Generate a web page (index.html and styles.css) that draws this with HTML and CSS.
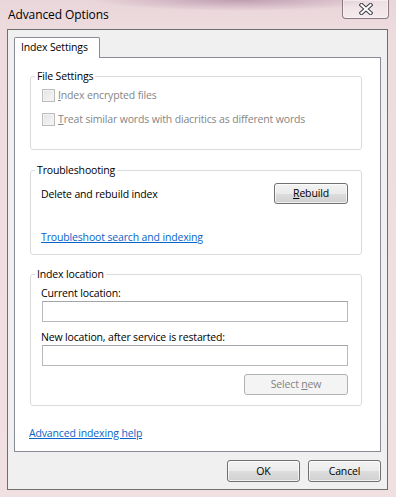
FILE: index.html
```html
<!DOCTYPE html>
<html>
<head>
<meta charset="utf-8">
<link rel="stylesheet" href="styles.css">
</head>
<body>
<div class="window">
  <div class="titlebar">
    <span class="title">Advanced Options</span>
    <div class="close">
      <svg width="14" height="12" viewBox="0 0 14 12">
        <path d="M2.5 2 L11.5 10 M11.5 2 L2.5 10" stroke="#3c3c44" stroke-width="4.2" stroke-linecap="square" fill="none"/>
        <path d="M2.5 2 L11.5 10 M11.5 2 L2.5 10" stroke="#ffffff" stroke-width="2.2" stroke-linecap="square" fill="none"/>
      </svg>
    </div>
  </div>
  <div class="client">
    <div class="tabs"><div class="tab">Index Settings</div></div>
    <div class="panel">
      <fieldset class="group g1">
        <legend>File Settings</legend>
        <div class="check"><span class="box"></span><span><u>I</u>ndex encrypted files</span></div>
        <div class="check"><span class="box"></span><span><u>T</u>reat similar words with diacritics as different words</span></div>
      </fieldset>
      <fieldset class="group g2">
        <legend>Troubleshooting</legend>
        <div class="row">
          <span>Delete and rebuild index</span>
          <button class="btn rebuild"><u>R</u>ebuild</button>
        </div>
        <a class="link trouble" href="#">Troubleshoot search and indexing</a>
      </fieldset>
      <fieldset class="group g3">
        <legend>Index location</legend>
        <div class="label">Current location:</div>
        <div class="input"></div>
        <div class="label second">New location, after service is restarted:</div>
        <div class="input"></div>
        <div class="btnrow"><button class="btn disabled selectnew">Select <u>n</u>ew</button></div>
      </fieldset>
      <a class="link help" href="#">Advanced indexing help</a>
    </div>
    <div class="footer">
      <button class="btn">OK</button>
      <button class="btn">Cancel</button>
    </div>
  </div>
</div>
</body>
</html>
```
FILE: styles.css
```css
body {
  margin: 0;
  font-family: "Open Sans", "Noto Sans", sans-serif;
  font-size: 10.5px;
  letter-spacing: -0.15px;
  color: #111;
}
.window {
  width: 396px;
  height: 497px;
  box-sizing: border-box;
  display: flex;
  flex-direction: column;
  background:
    radial-gradient(ellipse 150px 11px at 240px 0px, rgba(150, 100, 135, 0.5), rgba(150, 100, 135, 0) 100%),
    linear-gradient(180deg, #e9d6da 0, #eedbde 30px, #f1e0e1 100%);
}
.titlebar {
  height: 29px;
  display: flex;
  align-items: flex-start;
}
.title {
  padding: 7px 0 0 8px;
  line-height: 16px;
  font-size: 12px;
  letter-spacing: -0.1px;
  color: #000;
}
.close {
  margin-left: auto;
  margin-right: 7px;
  width: 47px;
  height: 19px;
  box-sizing: border-box;
  border: 1px solid rgba(70, 50, 60, 0.6);
  border-top: none;
  border-radius: 0 0 4px 4px;
  background: linear-gradient(180deg, rgba(255, 255, 255, 0.25), rgba(255, 255, 255, 0.45));
  box-shadow: inset 0 0 0 1px rgba(255, 255, 255, 0.45);
  display: flex;
  align-items: center;
  justify-content: center;
}
.client {
  margin: 0 8px 0 7px;
  height: 461px;
  box-sizing: border-box;
  border: 1px solid #6f6f6f;
  background: #f0f0f0;
  padding: 7px 6px 7px 6px;
  display: flex;
  flex-direction: column;
}
.tabs {
  display: flex;
}
.tab {
  position: relative;
  z-index: 1;
  width: 86px;
  height: 21px;
  box-sizing: border-box;
  border: 1px solid #898c95;
  border-bottom: none;
  border-radius: 2px 2px 0 0;
  background: #fff;
  padding-left: 6px;
  line-height: 19px;
  margin-bottom: -1px;
  color: #000;
}
.panel {
  height: 395px;
  box-sizing: border-box;
  border: 1px solid #898c95;
  background: #fff;
  padding: 11px 18px 0 15px;
  display: flex;
  flex-direction: column;
  align-items: flex-start;
}
.group {
  align-self: stretch;
  margin: 0;
  min-width: 0;
  border: 1px solid #d9dcdf;
  border-radius: 3px;
  padding: 0 13px 0 10px;
}
.group legend {
  padding: 0 2px;
  margin-left: -6px;
  line-height: 14px;
  height: 14px;
  color: #000;
}
.g1 {
  padding-top: 4px;
  padding-bottom: 22px;
}
.check {
  display: flex;
  align-items: center;
  height: 16px;
  color: #858585;
}
.check + .check {
  margin-top: 8px;
}
.box {
  width: 13px;
  height: 13px;
  box-sizing: border-box;
  margin: 0 3px 0 1px;
  border: 1px solid #bcbcbc;
  background: linear-gradient(135deg, #e3e3e3, #f7f7f7);
  box-shadow: inset 0 0 0 1px #f3f3f3;
}
.g2 {
  margin-top: 13px;
  padding-top: 6px;
  padding-bottom: 9px;
}
.row {
  display: flex;
  justify-content: space-between;
  align-items: center;
  height: 21px;
  color: #000;
}
.link {
  display: block;
  line-height: 16px;
  color: #0a64c8;
  text-decoration: underline;
}
.trouble {
  margin-top: 25px;
}
.btn {
  height: 21px;
  width: 73px;
  box-sizing: border-box;
  padding: 0;
  border: 1px solid #707070;
  border-radius: 3px;
  background: linear-gradient(180deg, #f3f3f3 0%, #ebebeb 50%, #dddddd 51%, #d0d0d0 100%);
  box-shadow: inset 0 0 0 1px rgba(255, 255, 255, 0.7);
  font-family: inherit;
  font-size: 10.5px;
  letter-spacing: -0.15px;
  color: #000;
  line-height: 19px;
}
.rebuild {
  width: 74px;
}
.g3 {
  margin-top: 12px;
  padding-top: 4px;
  padding-bottom: 10px;
}
.label {
  line-height: 16px;
  color: #000;
}
.label.second {
  margin-top: 7px;
}
.input {
  height: 21px;
  margin-left: 1px;
  box-sizing: border-box;
  border: 1px solid #b5b8bd;
  border-top-color: #a2a5aa;
  background: #fff;
}
.btnrow {
  display: flex;
  justify-content: flex-end;
  margin-top: 8px;
}
.btn.disabled {
  border-color: #adb2b5;
  background: #f4f4f4;
  box-shadow: none;
  color: #838383;
}
.selectnew {
  width: 104px;
}
.help {
  margin-top: 19px;
  margin-left: -1px;
}
.footer {
  display: flex;
  justify-content: flex-end;
  gap: 8px;
  margin-top: 8px;
}
.footer .btn {
  height: 22px;
  line-height: 20px;
}
```
